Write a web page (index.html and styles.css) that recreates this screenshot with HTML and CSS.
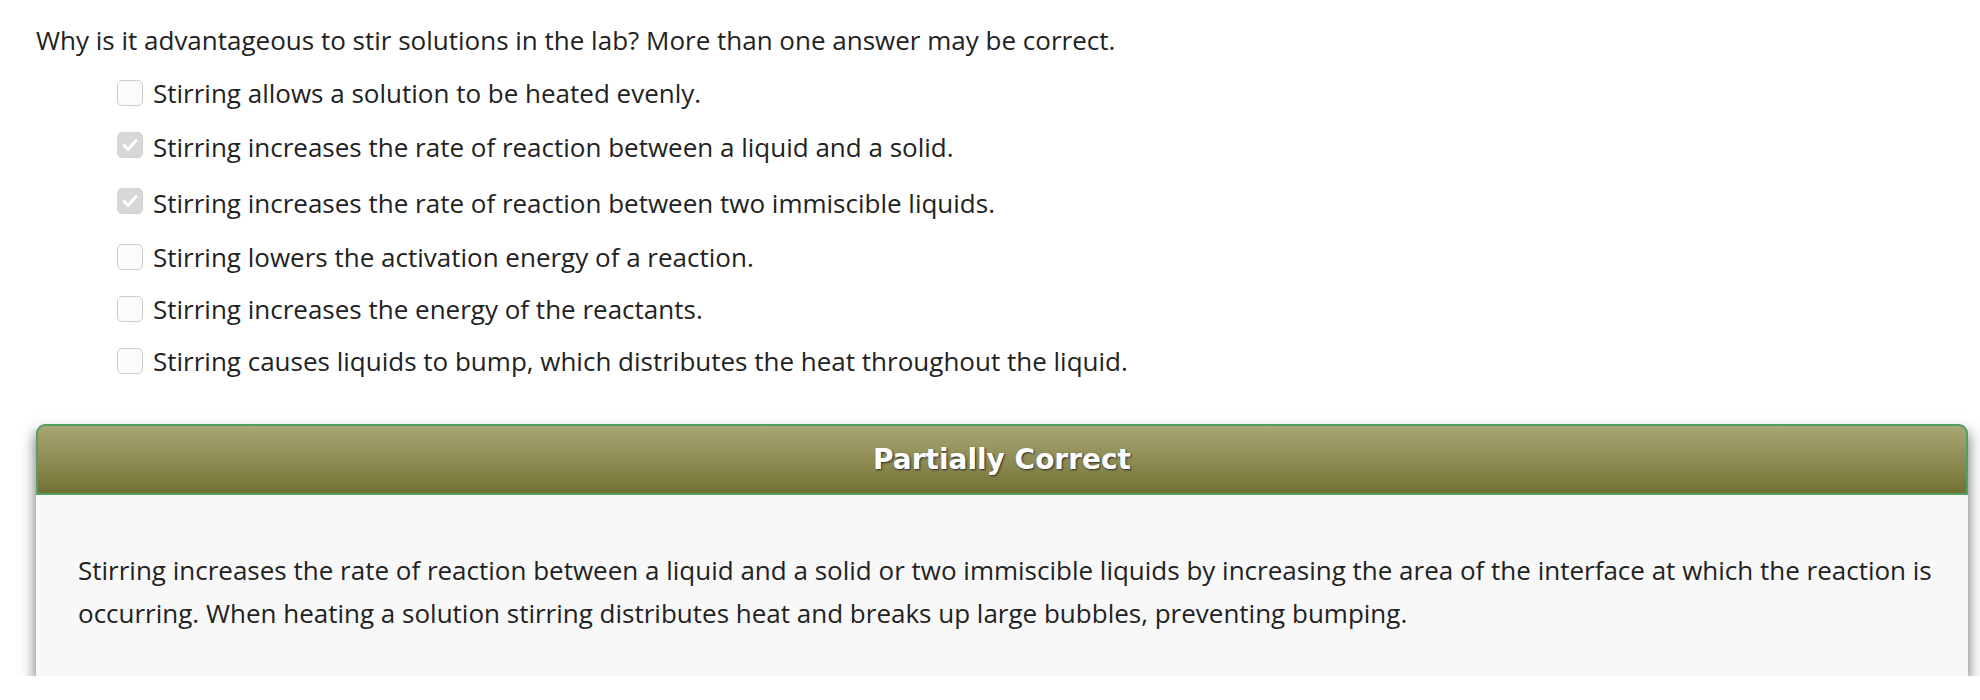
FILE: index.html
```html
<!DOCTYPE html>
<html lang="en">
<head>
<meta charset="utf-8">
<title>Quiz question</title>
<link rel="stylesheet" href="styles.css">
</head>
<body>
<div class="page">
  <p class="question">Why is it advantageous to stir solutions in the lab? More than one answer may be correct.</p>
  <ul class="options">
    <li class="option"><span class="box"></span><span class="label">Stirring allows a solution to be heated evenly.</span></li>
    <li class="option checked"><span class="box"><svg viewBox="0 0 26 26" width="26" height="26"><path d="M7 13.5 L11 17.5 L19 8.5" fill="none" stroke="#fff" stroke-width="3" stroke-linecap="round" stroke-linejoin="round"/></svg></span><span class="label">Stirring increases the rate of reaction between a liquid and a solid.</span></li>
    <li class="option checked"><span class="box"><svg viewBox="0 0 26 26" width="26" height="26"><path d="M7 13.5 L11 17.5 L19 8.5" fill="none" stroke="#fff" stroke-width="3" stroke-linecap="round" stroke-linejoin="round"/></svg></span><span class="label">Stirring increases the rate of reaction between two immiscible liquids.</span></li>
    <li class="option"><span class="box"></span><span class="label">Stirring lowers the activation energy of a reaction.</span></li>
    <li class="option"><span class="box"></span><span class="label">Stirring increases the energy of the reactants.</span></li>
    <li class="option"><span class="box"></span><span class="label">Stirring causes liquids to bump, which distributes the heat throughout the liquid.</span></li>
  </ul>
  <div class="feedback">
    <div class="feedback-head">Partially Correct</div>
    <div class="feedback-body">
      <p>Stirring increases the rate of reaction between a liquid and a solid or two immiscible liquids by increasing the area of the interface at which the reaction is occurring. When heating a solution stirring distributes heat and breaks up large bubbles, preventing bumping.</p>
    </div>
  </div>
</div>
</body>
</html>
```

FILE: styles.css
```css
html, body {
  margin: 0;
  padding: 0;
  background: #ffffff;
}

body {
  font-family: "Open Sans", "Noto Sans", sans-serif;
  font-size: 26px;
  color: #222222;
}

.page {
  padding: 22px 12px 0 36px;
}

.question {
  margin: 0;
  line-height: 36px;
}

.options {
  list-style: none;
  margin: 9px 0 0 81px;
  padding: 0;
}

.option {
  display: flex;
  align-items: center;
  height: 52px;
}

.option.checked {
  height: 56px;
  align-items: flex-start;
  padding-top: 13px;
  box-sizing: border-box;
}

.box {
  flex: none;
  width: 24px;
  height: 24px;
  border: 1px solid #cccccc;
  border-radius: 5px;
  background: #fbfbfb;
  margin-right: 10px;
  position: relative;
}

.checked .box {
  background: #d7d7d7;
  border-color: #d3d3d3;
}

.box svg {
  display: block;
  position: absolute;
  left: -1px;
  top: -1px;
}

.label {
  line-height: 30px;
}

.feedback {
  margin-top: 37px;
  box-shadow: 0 9px 14px rgba(0, 0, 0, 0.6);
  background: #f8f8f8;
}

.feedback-head {
  height: 67px;
  box-sizing: content-box;
  border: 2px solid #52a062;
  border-radius: 9px 9px 0 0;
  background: linear-gradient(to bottom, #a7a675 0%, #8f8d55 50%, #727133 100%);
  display: flex;
  align-items: center;
  justify-content: center;
  padding-top: 0;
  font-family: "DejaVu Sans", Verdana, sans-serif;
  font-weight: bold;
  font-size: 28px;
  line-height: 1;
  color: #ffffff;
  text-shadow: 1px 1px 2px #2a2a2a;
}

.feedback-body {
  padding: 54px 24px 41px 42px;
}

.feedback-body p {
  margin: 0;
  line-height: 43px;
}
```
